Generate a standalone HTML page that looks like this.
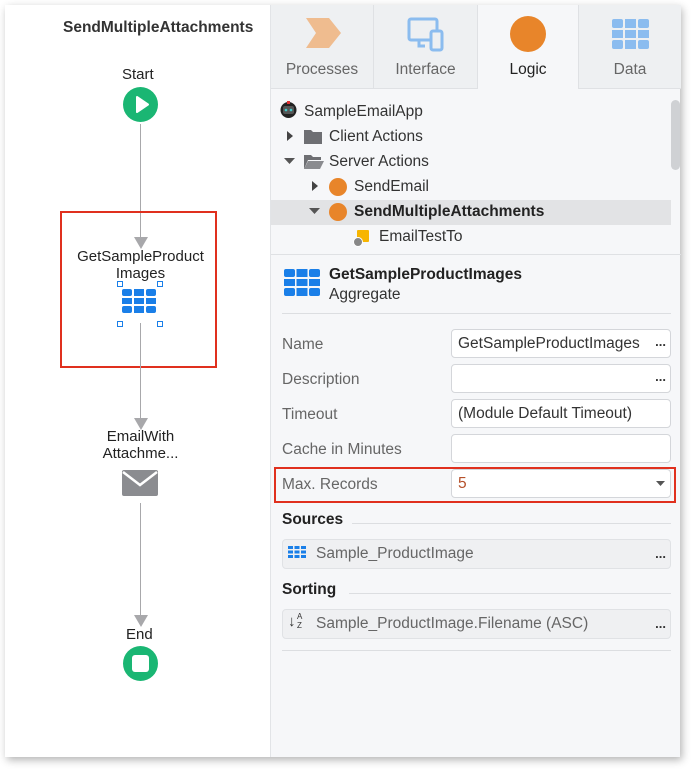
<!DOCTYPE html>
<html><head><meta charset="utf-8"><style>
*{box-sizing:border-box;margin:0;padding:0}
body{width:695px;height:772px;background:#fff;font-family:"Liberation Sans",sans-serif;position:relative;overflow:hidden;color:#222}
.card{position:absolute;left:5px;top:5px;width:675px;height:752px;background:#fff;box-shadow:2px 3px 8px rgba(0,0,0,.3)}
.right{position:absolute;left:270px;top:5px;width:410px;height:752px;background:#f6f7f9;border-left:1px solid #e2e4e7}
.a{position:absolute;white-space:nowrap}
.tab{position:absolute;top:0;height:84px;background:#eef0f2;border-right:1px solid #dfe1e4;border-bottom:1px solid #dfe1e4;text-align:center;font-size:15.5px;color:#666}
.tab .l{position:absolute;left:0;right:0;top:56px}
.lbl{position:absolute;left:11px;font-size:15.5px;color:#666}
.inp{position:absolute;left:180px;width:220px;height:29px;background:#fff;border:1px solid #d4d6da;border-radius:4px;font-size:15.5px;padding:5px 6px;color:#333;white-space:nowrap;overflow:hidden}
.dots{position:absolute;right:4px;top:4px;font-weight:bold;font-size:13px;color:#333}
.box{position:absolute;left:11px;width:389px;height:30px;background:#eff0f2;border:1px solid #e0e2e5;border-radius:4px;font-size:15.5px;color:#666}
.line{position:absolute;height:1px;background:#dcdee1}
.t{position:absolute;font-size:15.5px;color:#333;white-space:nowrap}
</style></head><body>
<div class="card"></div>
<div class="a" style="left:63px;top:19px;font-size:15.5px;font-weight:bold;color:#333">SendMultipleAttachments</div>
<div class="a" style="left:122px;top:66px;font-size:15px;color:#222">Start</div>
<div class="a" style="left:123px;top:87px;width:35px;height:35px;border-radius:50%;background:#1ab673"></div>
<svg class="a" style="left:123px;top:87px" width="35" height="35"><path d="M14 10 L25 17.5 L14 25 Z" fill="#fff" stroke="#fff" stroke-width="2" stroke-linejoin="round"/></svg>
<div class="a" style="left:140px;top:124px;width:1px;height:113px;background:#a8a8ab"></div>
<svg class="a" style="left:134px;top:237px" width="14" height="12"><path d="M0 0H14L7 12Z" fill="#a8a8ab"/></svg>
<div class="a" style="left:60px;top:211px;width:157px;height:157px;border:2px solid #e0301e"></div>
<div class="a" style="left:58px;top:248px;width:165px;text-align:center;font-size:15px;line-height:17px;color:#222">GetSampleProduct<br>Images</div>
<svg class="a" style="left:116px;top:280px" width="48" height="48">
<rect x="1.5" y="1.5" width="5" height="5" fill="#fff" stroke="#1a7fe8"/><rect x="41.5" y="1.5" width="5" height="5" fill="#fff" stroke="#1a7fe8"/>
<rect x="1.5" y="41.5" width="5" height="5" fill="#fff" stroke="#1a7fe8"/><rect x="41.5" y="41.5" width="5" height="5" fill="#fff" stroke="#1a7fe8"/>
<g fill="#1a7fe8"><rect x="6" y="9" width="10" height="7" rx="2"/><rect x="18" y="9" width="10" height="7"/><rect x="30" y="9" width="10" height="7" rx="2"/>
<rect x="6" y="18" width="10" height="6"/><rect x="18" y="18" width="10" height="6"/><rect x="30" y="18" width="10" height="6"/>
<rect x="6" y="26" width="10" height="7" rx="2"/><rect x="18" y="26" width="10" height="7"/><rect x="30" y="26" width="10" height="7" rx="2"/></g></svg>
<div class="a" style="left:140px;top:323px;width:1px;height:95px;background:#a8a8ab"></div>
<svg class="a" style="left:134px;top:418px" width="14" height="12"><path d="M0 0H14L7 12Z" fill="#a8a8ab"/></svg>
<div class="a" style="left:58px;top:428px;width:165px;text-align:center;font-size:15px;line-height:17px;color:#222">EmailWith<br>Attachme...</div>
<svg class="a" style="left:122px;top:470px" width="36" height="27"><rect x="0" y="0" width="36" height="26" rx="2" fill="#8b8c90"/><path d="M1 2 L18 15 L35 2" fill="none" stroke="#fff" stroke-width="2.5"/></svg>
<div class="a" style="left:140px;top:503px;width:1px;height:113px;background:#a8a8ab"></div>
<svg class="a" style="left:134px;top:615px" width="14" height="12"><path d="M0 0H14L7 12Z" fill="#a8a8ab"/></svg>
<div class="a" style="left:126px;top:626px;font-size:15px;color:#222">End</div>
<div class="a" style="left:123px;top:646px;width:35px;height:35px;border-radius:50%;background:#1ab673"></div>
<div class="a" style="left:132px;top:655px;width:17px;height:17px;border-radius:3px;background:#fff"></div>

<div class="right">
<div class="tab" style="left:0;width:103px"><svg style="position:absolute;left:35px;top:13px" width="36" height="30"><path d="M0 0H23L35 15L23 30H0L10 15Z" fill="#efbc8f"/></svg><div class="l">Processes</div></div>
<div class="tab" style="left:103px;width:104px"><svg style="position:absolute;left:33px;top:12px" width="38" height="36" fill="none" stroke="#8bbcef" stroke-width="3"><rect x="2" y="2" width="28" height="21" rx="2"/><path d="M12 23v6h6"/><rect x="24" y="14" width="11" height="19" rx="2" fill="#eef0f2"/></svg><div class="l">Interface</div></div>
<div class="tab" style="left:207px;width:101px;background:#f6f7f9;border-bottom:none;color:#222"><div style="position:absolute;left:32px;top:11px;width:36px;height:36px;border-radius:50%;background:#e8852a"></div><div class="l">Logic</div></div>
<div class="tab" style="left:308px;width:102px;border-right:none"><svg style="position:absolute;left:33px;top:14px" width="37" height="30" fill="#8bbcef"><rect x="0" y="0" width="11" height="9" rx="2"/><rect x="13" y="0" width="11" height="9"/><rect x="26" y="0" width="11" height="9" rx="2"/><rect x="0" y="11" width="11" height="8"/><rect x="13" y="11" width="11" height="8"/><rect x="26" y="11" width="11" height="8"/><rect x="0" y="21" width="11" height="9" rx="2"/><rect x="13" y="21" width="11" height="9"/><rect x="26" y="21" width="11" height="9" rx="2"/></svg><div class="l">Data</div></div>

<div class="a" style="left:400px;top:95px;width:9px;height:70px;border-radius:5px;background:#cfd1d4"></div>
<div class="a" style="left:0;top:195px;width:400px;height:25px;background:#e2e3e5"></div>
<svg class="a" style="left:9px;top:96px" width="17" height="18"><circle cx="8.5" cy="9" r="8" fill="#222"/><rect x="3" y="5" width="11" height="8" rx="2" fill="#555"/><circle cx="6" cy="9" r="1.3" fill="#4cc"/><circle cx="11" cy="9" r="1.3" fill="#4cc"/><rect x="7" y="0" width="3" height="3" fill="#d33"/></svg>
<div class="t" style="left:33px;top:98px">SampleEmailApp</div>
<svg class="a" style="left:15px;top:125px" width="8" height="12"><path d="M1 1L7 6L1 11Z" fill="#444"/></svg>
<svg class="a" style="left:33px;top:124px" width="19" height="16"><path d="M0 1H7L9 3H18V15H0Z" fill="#6e6f73"/></svg>
<div class="t" style="left:58px;top:123px">Client Actions</div>
<svg class="a" style="left:13px;top:152px" width="12" height="8"><path d="M0 1H11L5.5 7Z" fill="#555"/></svg>
<svg class="a" style="left:33px;top:149px" width="20" height="16"><path d="M0 1H7L9 3H17V6H4L0 15Z" fill="#6e6f73"/><path d="M4 7H20L16 15H0Z" fill="#8a8b8f"/></svg>
<div class="t" style="left:58px;top:148px">Server Actions</div>
<svg class="a" style="left:40px;top:175px" width="8" height="12"><path d="M1 1L7 6L1 11Z" fill="#444"/></svg>
<div class="a" style="left:58px;top:173px;width:18px;height:18px;border-radius:50%;background:#e8852a"></div>
<div class="t" style="left:83px;top:173px">SendEmail</div>
<svg class="a" style="left:38px;top:202px" width="12" height="8"><path d="M0 1H11L5.5 7Z" fill="#555"/></svg>
<div class="a" style="left:58px;top:198px;width:18px;height:18px;border-radius:50%;background:#e8852a"></div>
<div class="t" style="left:83px;top:198px;font-weight:bold;color:#222">SendMultipleAttachments</div>
<svg class="a" style="left:82px;top:222px" width="20" height="20"><rect x="4" y="3" width="12" height="12" rx="1" fill="#f7b500"/><circle cx="5" cy="15" r="4.5" fill="#888" stroke="#fff"/></svg>
<div class="t" style="left:108px;top:223px">EmailTestTo</div>
<div class="line" style="left:0;top:249px;width:410px;background:#dfe1e4"></div>

<svg class="a" style="left:13px;top:264px" width="36" height="28" fill="#1a7fe8"><rect x="0" y="0" width="11" height="8" rx="2"/><rect x="12.5" y="0" width="11" height="8"/><rect x="25" y="0" width="11" height="8" rx="2"/><rect x="0" y="10" width="11" height="7"/><rect x="12.5" y="10" width="11" height="7"/><rect x="25" y="10" width="11" height="7"/><rect x="0" y="19" width="11" height="8" rx="2"/><rect x="12.5" y="19" width="11" height="8"/><rect x="25" y="19" width="11" height="8" rx="2"/></svg>
<div class="t" style="left:58px;top:261px;font-weight:bold;color:#222">GetSampleProductImages</div>
<div class="t" style="left:58px;top:281px">Aggregate</div>
<div class="line" style="left:11px;top:308px;width:389px"></div>

<div class="lbl" style="top:331px">Name</div><div class="inp" style="top:324px">GetSampleProductImages<span class="dots">...</span></div>
<div class="lbl" style="top:366px">Description</div><div class="inp" style="top:359px"><span class="dots">...</span></div>
<div class="lbl" style="top:401px">Timeout</div><div class="inp" style="top:394px">(Module Default Timeout)</div>
<div class="lbl" style="top:436px">Cache in Minutes</div><div class="inp" style="top:429px"></div>
<div class="lbl" style="top:471px">Max. Records</div><div class="inp" style="top:464px;color:#b5502a">5<svg style="position:absolute;right:5px;top:11px" width="9" height="6"><path d="M0 0H9L4.5 5Z" fill="#555"/></svg></div>
<div class="a" style="left:3px;top:462px;width:402px;height:36px;border:2px solid #e0301e"></div>

<div class="t" style="left:11px;top:506px;font-weight:bold;color:#222">Sources</div>
<div class="line" style="left:81px;top:518px;width:319px"></div>
<div class="box" style="top:534px"><svg style="position:absolute;left:5px;top:6px" width="18" height="14" fill="#1a7fe8"><rect x="0" y="0" width="5" height="3"/><rect x="6.5" y="0" width="5" height="3"/><rect x="13" y="0" width="5" height="3"/><rect x="0" y="4.5" width="5" height="3"/><rect x="6.5" y="4.5" width="5" height="3"/><rect x="13" y="4.5" width="5" height="3"/><rect x="0" y="9" width="5" height="3"/><rect x="6.5" y="9" width="5" height="3"/><rect x="13" y="9" width="5" height="3"/></svg><span style="position:absolute;left:33px;top:5px">Sample_ProductImage</span><span class="dots" style="top:6px">...</span></div>
<div class="t" style="left:11px;top:576px;font-weight:bold;color:#222">Sorting</div>
<div class="line" style="left:78px;top:588px;width:322px"></div>
<div class="box" style="top:604px"><span style="position:absolute;left:5px;top:3px;font-size:15px;color:#333">↓</span><span style="position:absolute;left:14px;top:2px;font-size:8px;line-height:9px;color:#333">A<br>Z</span><span style="position:absolute;left:33px;top:5px">Sample_ProductImage.Filename (ASC)</span><span class="dots" style="top:6px">...</span></div>
<div class="line" style="left:11px;top:645px;width:389px"></div>
</div>
</body></html>
